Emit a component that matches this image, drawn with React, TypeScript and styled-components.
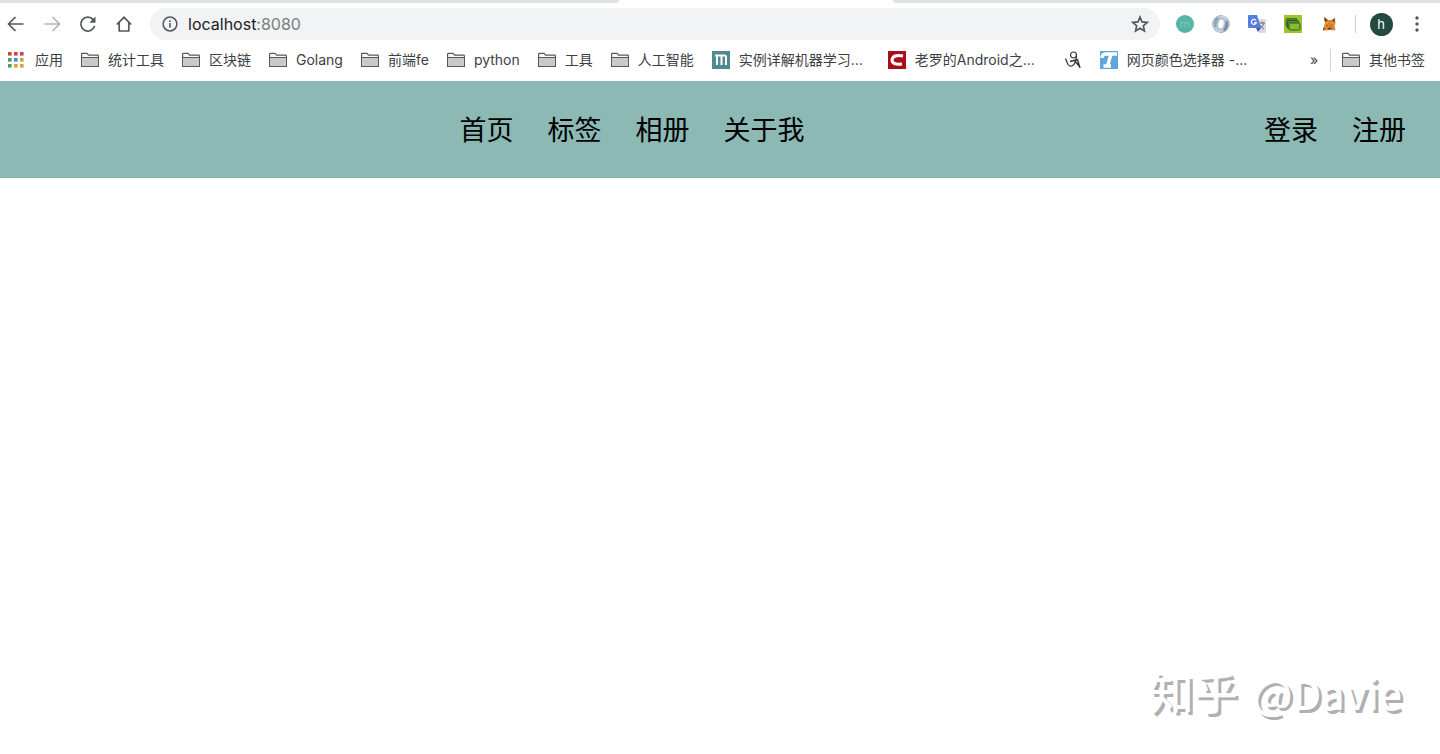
import React from "react";
import styled, { createGlobalStyle } from "styled-components";

const GlobalStyle = createGlobalStyle`
  * { box-sizing: border-box; }
  body {
    margin: 0;
    background: #fff;
    font-family: Inter, "Noto Sans CJK SC", sans-serif;
  }
  button { font: inherit; border: 0; background: none; padding: 0; }
  a { color: inherit; text-decoration: none; }
`;

const Page = styled.div`
  display: flex;
  flex-direction: column;
  min-height: 100vh;
`;

const TabStrip = styled.div`
  display: flex;
  justify-content: space-between;
  height: 3px;
`;

const InactiveTabs = styled.div<{ $share: string; $side: "left" | "right" }>`
  width: ${(p) => p.$share};
  background: #dee0e4;
  border-radius: ${(p) => (p.$side === "left" ? "0 0 8px 0" : "0 0 0 8px")};
`;

const Toolbar = styled.div`
  display: flex;
  align-items: center;
  height: 42px;
  padding-right: 5px;
`;

const IconButton = styled.button<{ $faded?: boolean }>`
  display: flex;
  align-items: center;
  justify-content: center;
  flex: none;
  width: 36px;
  height: 32px;
  color: ${(p) => (p.$faded ? "#b4b6b9" : "#54575b")};
`;

const Navigation = styled.div`
  display: flex;
  margin: 0 8px 0 -2px;
`;

const AddressBar = styled.div`
  display: flex;
  align-items: center;
  flex: 1;
  height: 32px;
  padding: 0 2px 0 12px;
  border-radius: 16px;
  background: #f1f3f4;
  color: #54575b;
`;

const Address = styled.span`
  flex: 1;
  margin-left: 10px;
  font-size: 16px;
  line-height: 20px;
  color: #7b7e82;
`;

const Host = styled.span`
  color: #202124;
`;

const Extensions = styled.div`
  display: flex;
  align-items: center;
  margin-left: 7px;
`;

const Divider = styled.span<{ $tall?: boolean }>`
  flex: none;
  width: 1px;
  height: ${(p) => (p.$tall ? 22 : 18)}px;
  margin: ${(p) => (p.$tall ? "0 11px 0 0" : "0 7px 0 8px")};
  background: #d0d2d5;
`;

const Avatar = styled.span`
  display: flex;
  align-items: center;
  justify-content: center;
  width: 23px;
  height: 23px;
  border-radius: 50%;
  background: #234a40;
  color: #fff;
  font-size: 13px;
  line-height: 16px;
`;

const BookmarkBar = styled.nav`
  display: flex;
  align-items: center;
  height: 36px;
  padding: 0 15px 6px 8px;
  font-size: 14px;
  line-height: 20px;
  color: #3c4043;
`;

const BookmarkList = styled.div`
  display: flex;
  flex: 1;
  gap: 18px;
  min-width: 0;
  overflow: hidden;
`;

const Bookmark = styled.a<{ $wide?: boolean }>`
  display: flex;
  align-items: center;
  flex: none;
  gap: 9px;
  width: ${(p) => (p.$wide ? "158px" : "auto")};
  white-space: nowrap;
`;

const Overflow = styled.button`
  width: 32px;
  color: #3c4043;
`;

const SiteHeader = styled.header`
  display: flex;
  align-items: center;
  height: 97px;
  padding: 0 34px 2px 0;
  border-top: 1px solid #93b3ae;
  background: #8cb9b3;
  color: #000;
  font-family: "Noto Sans CJK SC", sans-serif;
  font-size: 27px;
  line-height: 40px;
`;

const Menu = styled.nav<{ $main?: boolean }>`
  display: flex;
  justify-content: center;
  flex: ${(p) => (p.$main ? "1" : "none")};
  gap: 34px;
`;

const Content = styled.main`
  display: flex;
  flex: 1;
  align-items: flex-end;
  justify-content: flex-end;
  padding: 0 38px 30px;
`;

const Signature = styled.p`
  display: flex;
  align-items: baseline;
  gap: 15px;
  margin: 0;
  color: #fff;
  font-family: "Noto Sans CJK SC", sans-serif;
  font-size: 44px;
  font-weight: 500;
  line-height: 64px;
  text-shadow: 3px 3px 0 #b0b0b0;
`;

const Author = styled.span`
  font-size: 41px;
`;

const BackIcon = ({ flip }: { flip?: boolean }) => (
  <svg width="18" height="18" viewBox="0 0 18 18" fill="none" stroke="currentColor" strokeWidth="1.7">
    <path d={flip ? "M1.5 9H16M9.5 2l7 7-7 7" : "M16.5 9H2M8.5 2l-7 7 7 7"} />
  </svg>
);

const ReloadIcon = () => (
  <svg width="18" height="18" viewBox="0 0 18 18">
    <path d="M14.3 4.6A7 7 0 1 0 15.6 11" fill="none" stroke="currentColor" strokeWidth="1.7" />
    <path d="M16.5 1.5v6.200h-6.200z" fill="currentColor" />
  </svg>
);

const HomeIcon = () => (
  <svg width="18" height="18" viewBox="0 0 18 18" fill="none" stroke="currentColor" strokeWidth="1.7">
    <path d="M1.8 9.500 9 2.300l7.200 7.200M4.200 7.800v8.200h9.600V7.800" />
  </svg>
);

const InfoIcon = () => (
  <svg width="16" height="16" viewBox="0 0 16 16" fill="none" stroke="currentColor">
    <circle cx="8" cy="8" r="6.9" strokeWidth="1.5" />
    <path d="M8 7v4.500M8 4.300v1.600" strokeWidth="1.6" />
  </svg>
);

const StarIcon = () => (
  <svg width="18" height="18" viewBox="0 0 18 18" fill="none" stroke="currentColor" strokeWidth="1.6">
    <path d="m9 2 2 4.900 5.200.5-3.900 3.400 1.200 5.200L9 13.200 4.500 16l1.200-5.200-3.900-3.400 5.200-.5z" />
  </svg>
);

const MoreIcon = () => (
  <svg width="18" height="18" viewBox="0 0 18 18" fill="currentColor">
    <circle cx="9" cy="3" r="1.700" />
    <circle cx="9" cy="9" r="1.700" />
    <circle cx="9" cy="15" r="1.700" />
  </svg>
);

const RoundMIcon = () => (
  <svg width="18" height="18" viewBox="0 0 18 18">
    <circle cx="9" cy="9" r="9" fill="#55b3a8" />
    <path d="M5 12.500V6.500M5 8.500q2-3 4 0v4M9 8.500q2-3 4 0v4" fill="none" stroke="#86cdb5" />
  </svg>
);

const SwirlIcon = () => (
  <svg width="18" height="18" viewBox="0 0 18 18">
    <circle cx="9" cy="9" r="9" fill="#b3c0ce" />
    <path d="M10 0C2 1 0 9 4 15 4 10 4 5 10 0z" fill="#8fa3ba" />
    <path d="M8 18c8-1 10-9 6-15 0 5 0 10-6 15z" fill="#738cab" />
    <path d="M6 2.500q6-2.500 9 3M12 15.500q-6 2.500-9-3" fill="none" stroke="#d3dbe4" strokeWidth="1.2" />
    <ellipse cx="9" cy="9" rx="2.600" ry="4.500" fill="#fff" transform="rotate(12 9 9)" />
  </svg>
);

const TranslateIcon = () => (
  <svg width="18" height="18" viewBox="0 0 18 18">
    <path d="M8 4h9q1 0 1 1v12q0 1-1 1h-6z" fill="#d9dbde" />
    <path d="M1 0h8l4 13H1q-1 0-1-1V1q0-1 1-1z" fill="#547de0" />
    <path d="M8 13h5l-3 4z" fill="#3856b4" />
    <path d="M11.500 8h5.500M14 6.500V8m2 0q-1 4-4 5m0-3q2 3 4 4" fill="none" stroke="#6c757d" />
    <path d="M8 5.500A2.500 2.500 0 1 0 8.300 7.500H6" fill="none" stroke="#fff" strokeWidth="1.2" />
  </svg>
);

const WindowsIcon = () => (
  <svg width="18" height="18" viewBox="0 0 18 18">
    <path d="M0 0h18v18H0z" fill="#9ac52c" />
    <rect x="2" y="3.500" width="11" height="8" rx="1" fill="#588432" stroke="#4b6d30" />
    <rect x="3.500" y="5.500" width="11" height="8" rx="1" fill="#5d8b2a" stroke="#34592d" />
    <rect x="5" y="8" width="11" height="7" rx="1" fill="#83bd32" stroke="#34592d" />
  </svg>
);

const FoxIcon = () => (
  <svg width="18" height="18" viewBox="0 0 18 18">
    <path d="m4 2 4 3h4l3-2 .5 5-1 3 1 4-3 .5-2-1-3 1-4-.5.5-4 1-3z" fill="#df832d" />
    <path d="m4 2 4 3-3 2.500zM15 3l-3 2 2 3z" fill="#70492f" />
    <path d="m5 8 3-2-1 5-3 0zM14 8l-3-2 1 5h2z" fill="#f19a3c" />
    <path d="m6 9 2 1.500-1 .5zM13 9l-2 1.500 1 .5zM8 13l3-.5.5 2H8zM3 12l2 3-2 .5z" fill="#55443a" />
  </svg>
);

const AppsIcon = () => {
  const colors = ["#c5483e", "#c5483e", "#c94367", "#4d9b68", "#4f83dc", "#d4a13b", "#4d9b68", "#d4a13b", "#d4a13b"];
  return (
    <svg width="18" height="16" viewBox="0 0 18 16">
      {colors.map((color, i) => (
        <rect key={i} x={(i % 3) * 6} y={Math.floor(i / 3) * 6} width="3.6" height="3.6" fill={color} />
      ))}
    </svg>
  );
};

const FolderIcon = () => (
  <svg width="18" height="16" viewBox="0 0 18 16">
    <path d="M.6 14.400V2.200q0-.8.800-.8h4.600l1.600 1.700h9q.8 0 .8.800v10.500z" fill="#fafafa" stroke="#56585a" strokeWidth="1.2" />
    <path d="M1.200 5.500h15.600v8.300H1.200z" fill="#c9c9c9" />
    <path d="M1 5.500h16" stroke="#56585a" />
  </svg>
);

const SquareMIcon = () => (
  <svg width="18" height="18" viewBox="0 0 18 18">
    <path d="M0 0h18v18H0z" fill="#518991" />
    <path d="M3 4.500h9.500q1.500 0 1.500 1.500V14M5 4.500V14M9.500 4.500V14" fill="none" stroke="#fff" strokeWidth="2" />
  </svg>
);

const RedCIcon = () => (
  <svg width="18" height="18" viewBox="0 0 18 18">
    <path d="M0 0h18v18H0z" fill="#a80f19" />
    <path d="M15 5Q5 3 4 9q0 5 10 4" fill="none" stroke="#fff" strokeWidth="3" />
  </svg>
);

const SketchIcon = () => (
  <svg width="18" height="18" viewBox="0 0 18 18" fill="none" stroke="#333">
    <circle cx="9.500" cy="4" r="3" strokeWidth="1.2" />
    <path d="M1.500 7.500 4 13.500q1.500 2 4 1.500 4-2 4.500-10" strokeWidth="1.2" />
    <path d="m6 10.500 7.500-2 2.500 8.500M10 9l6 7" strokeWidth="1.4" />
  </svg>
);

const BlueTIcon = () => (
  <svg width="18" height="18" viewBox="0 0 18 18">
    <path d="M0 0h18v18H0z" fill="#62a5dc" />
    <path d="M2 7q0-4 4-4h11M11 3 7.500 15M3.500 15h7.500" fill="none" stroke="#fff" strokeWidth="3.4" />
  </svg>
);

const bookmarks = [
  { title: "应用", icon: <AppsIcon /> },
  { title: "统计工具", icon: <FolderIcon /> },
  { title: "区块链", icon: <FolderIcon /> },
  { title: "Golang", icon: <FolderIcon /> },
  { title: "前端fe", icon: <FolderIcon /> },
  { title: "python", icon: <FolderIcon /> },
  { title: "工具", icon: <FolderIcon /> },
  { title: "人工智能", icon: <FolderIcon /> },
  { title: "实例详解机器学习...", icon: <SquareMIcon />, wide: true },
  { title: "老罗的Android之...", icon: <RedCIcon />, wide: true },
  { title: "", icon: <SketchIcon /> },
  { title: "网页颜色选择器 -...", icon: <BlueTIcon />, wide: true },
];

const extensions = [
  { name: "Momentum", icon: <RoundMIcon /> },
  { name: "JSON", icon: <SwirlIcon /> },
  { name: "Translate", icon: <TranslateIcon /> },
  { name: "Windows", icon: <WindowsIcon /> },
  { name: "Wallet", icon: <FoxIcon /> },
];

export default function App() {
  return (
    <Page>
      <GlobalStyle />
      <TabStrip>
        <InactiveTabs $share="43%" $side="left" />
        <InactiveTabs $share="38%" $side="right" />
      </TabStrip>
      <Toolbar>
        <Navigation>
          <IconButton aria-label="Back"><BackIcon /></IconButton>
          <IconButton aria-label="Forward" $faded><BackIcon flip /></IconButton>
          <IconButton aria-label="Reload"><ReloadIcon /></IconButton>
          <IconButton aria-label="Home"><HomeIcon /></IconButton>
        </Navigation>
        <AddressBar>
          <InfoIcon />
          <Address><Host>localhost</Host>:8080</Address>
          <IconButton aria-label="Bookmark this page"><StarIcon /></IconButton>
        </AddressBar>
        <Extensions>
          {extensions.map((item) => (
            <IconButton key={item.name} aria-label={item.name}>{item.icon}</IconButton>
          ))}
        </Extensions>
        <Divider />
        <IconButton aria-label="Profile"><Avatar>h</Avatar></IconButton>
        <IconButton aria-label="More"><MoreIcon /></IconButton>
      </Toolbar>
      <BookmarkBar>
        <BookmarkList>
          {bookmarks.map((item) => (
            <Bookmark key={item.title} href="#" $wide={item.wide} aria-label={item.title || "Bookmark"}>
              {item.icon}
              {item.title && <span>{item.title}</span>}
            </Bookmark>
          ))}
        </BookmarkList>
        <Overflow aria-label="More bookmarks">»</Overflow>
        <Divider $tall />
        <Bookmark href="#"><FolderIcon /><span>其他书签</span></Bookmark>
      </BookmarkBar>
      <SiteHeader>
        <Menu $main>
          <a href="#home">首页</a>
          <a href="#tags">标签</a>
          <a href="#album">相册</a>
          <a href="#about">关于我</a>
        </Menu>
        <Menu>
          <a href="#login">登录</a>
          <a href="#register">注册</a>
        </Menu>
      </SiteHeader>
      <Content>
        <Signature>
          <span>知乎</span>
          <Author>@Davie</Author>
        </Signature>
      </Content>
    </Page>
  );
}
